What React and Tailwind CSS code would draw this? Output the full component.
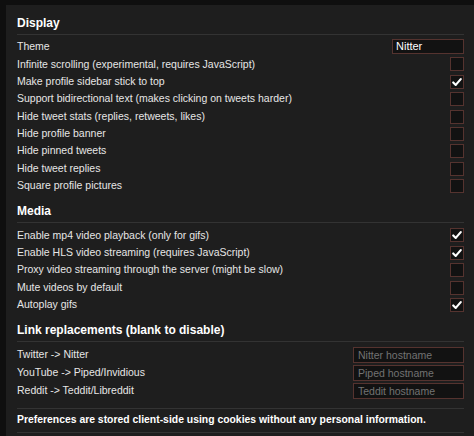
import React from 'react'

const font = { fontFamily: '"Liberation Sans", Arial, Helvetica, sans-serif' }

function Check({ on }) {
  return (
    <span className="w-[14px] h-[14px] border border-[#55332f] bg-[#121212] flex items-center justify-center shrink-0">
      {on && (
        <svg viewBox="0 0 12 12" className="w-[10px] h-[10px]">
          <path d="M1.5 6.5 L4.5 9.5 L10.5 2.5" fill="none" stroke="#fff" strokeWidth="2.6" strokeLinecap="round" strokeLinejoin="round" />
        </svg>
      )}
    </span>
  )
}

function Row({ label, children }) {
  return (
    <div className="h-[17.4px] flex items-center justify-between">
      <span>{label}</span>
      {children}
    </div>
  )
}

function Section({ title, children, first }) {
  return (
    <div className={first ? 'pt-[10px]' : 'pt-[8.6px]'}>
      <div className="h-[16px] leading-[16px] text-[12px] font-bold text-white pb-[3px] box-content border-b border-[#333333]">
        {title}
      </div>
      <div className="pt-[3.3px]">{children}</div>
    </div>
  )
}

const display = [
  ['Infinite scrolling (experimental, requires JavaScript)', false],
  ['Make profile sidebar stick to top', true],
  ['Support bidirectional text (makes clicking on tweets harder)', false],
  ['Hide tweet stats (replies, retweets, likes)', false],
  ['Hide profile banner', false],
  ['Hide pinned tweets', false],
  ['Hide tweet replies', false],
  ['Square profile pictures', false],
]

const media = [
  ['Enable mp4 video playback (only for gifs)', true],
  ['Enable HLS video streaming (requires JavaScript)', true],
  ['Proxy video streaming through the server (might be slow)', false],
  ['Mute videos by default', false],
  ['Autoplay gifs', true],
]

const links = [
  ['Twitter -> Nitter', 'Nitter hostname'],
  ['YouTube -> Piped/Invidious', 'Piped hostname'],
  ['Reddit -> Teddit/Libreddit', 'Teddit hostname'],
]

export default function App() {
  return (
    <div className="h-screen bg-[#0f0f0f] pt-[5px] pl-[6px] overflow-hidden" style={font}>
      <div className="h-full bg-[#1e1e1e] pl-[11px] pr-[10px] text-[10.5px] text-[#e6e6e6]">
        <Section title="Display" first>
          <Row label="Theme">
            <span className="w-[72px] h-[15px] border border-[#55332f] bg-[#121212] text-white text-[11px] leading-[13px] px-[3px]">
              Nitter
            </span>
          </Row>
          {display.map(([l, on]) => (
            <Row key={l} label={l}>
              <Check on={on} />
            </Row>
          ))}
        </Section>
        <Section title="Media">
          {media.map(([l, on]) => (
            <Row key={l} label={l}>
              <Check on={on} />
            </Row>
          ))}
        </Section>
        <Section title="Link replacements (blank to disable)">
          {links.map(([l, ph]) => (
            <div key={l} className="h-[18px] flex items-center justify-between">
              <span>{l}</span>
              <input
                placeholder={ph}
                className="w-[111px] h-[16px] border border-[#55332f] bg-[#121212] text-[10.5px] px-[4px] outline-none placeholder:text-[#737373]"
                style={font}
              />
            </div>
          ))}
        </Section>
        <div className="mt-[8px] border-t border-b border-[#333333] h-[25px] flex items-center font-bold text-white text-[10.4px]">
          Preferences are stored client-side using cookies without any personal information.
        </div>
      </div>
    </div>
  )
}
